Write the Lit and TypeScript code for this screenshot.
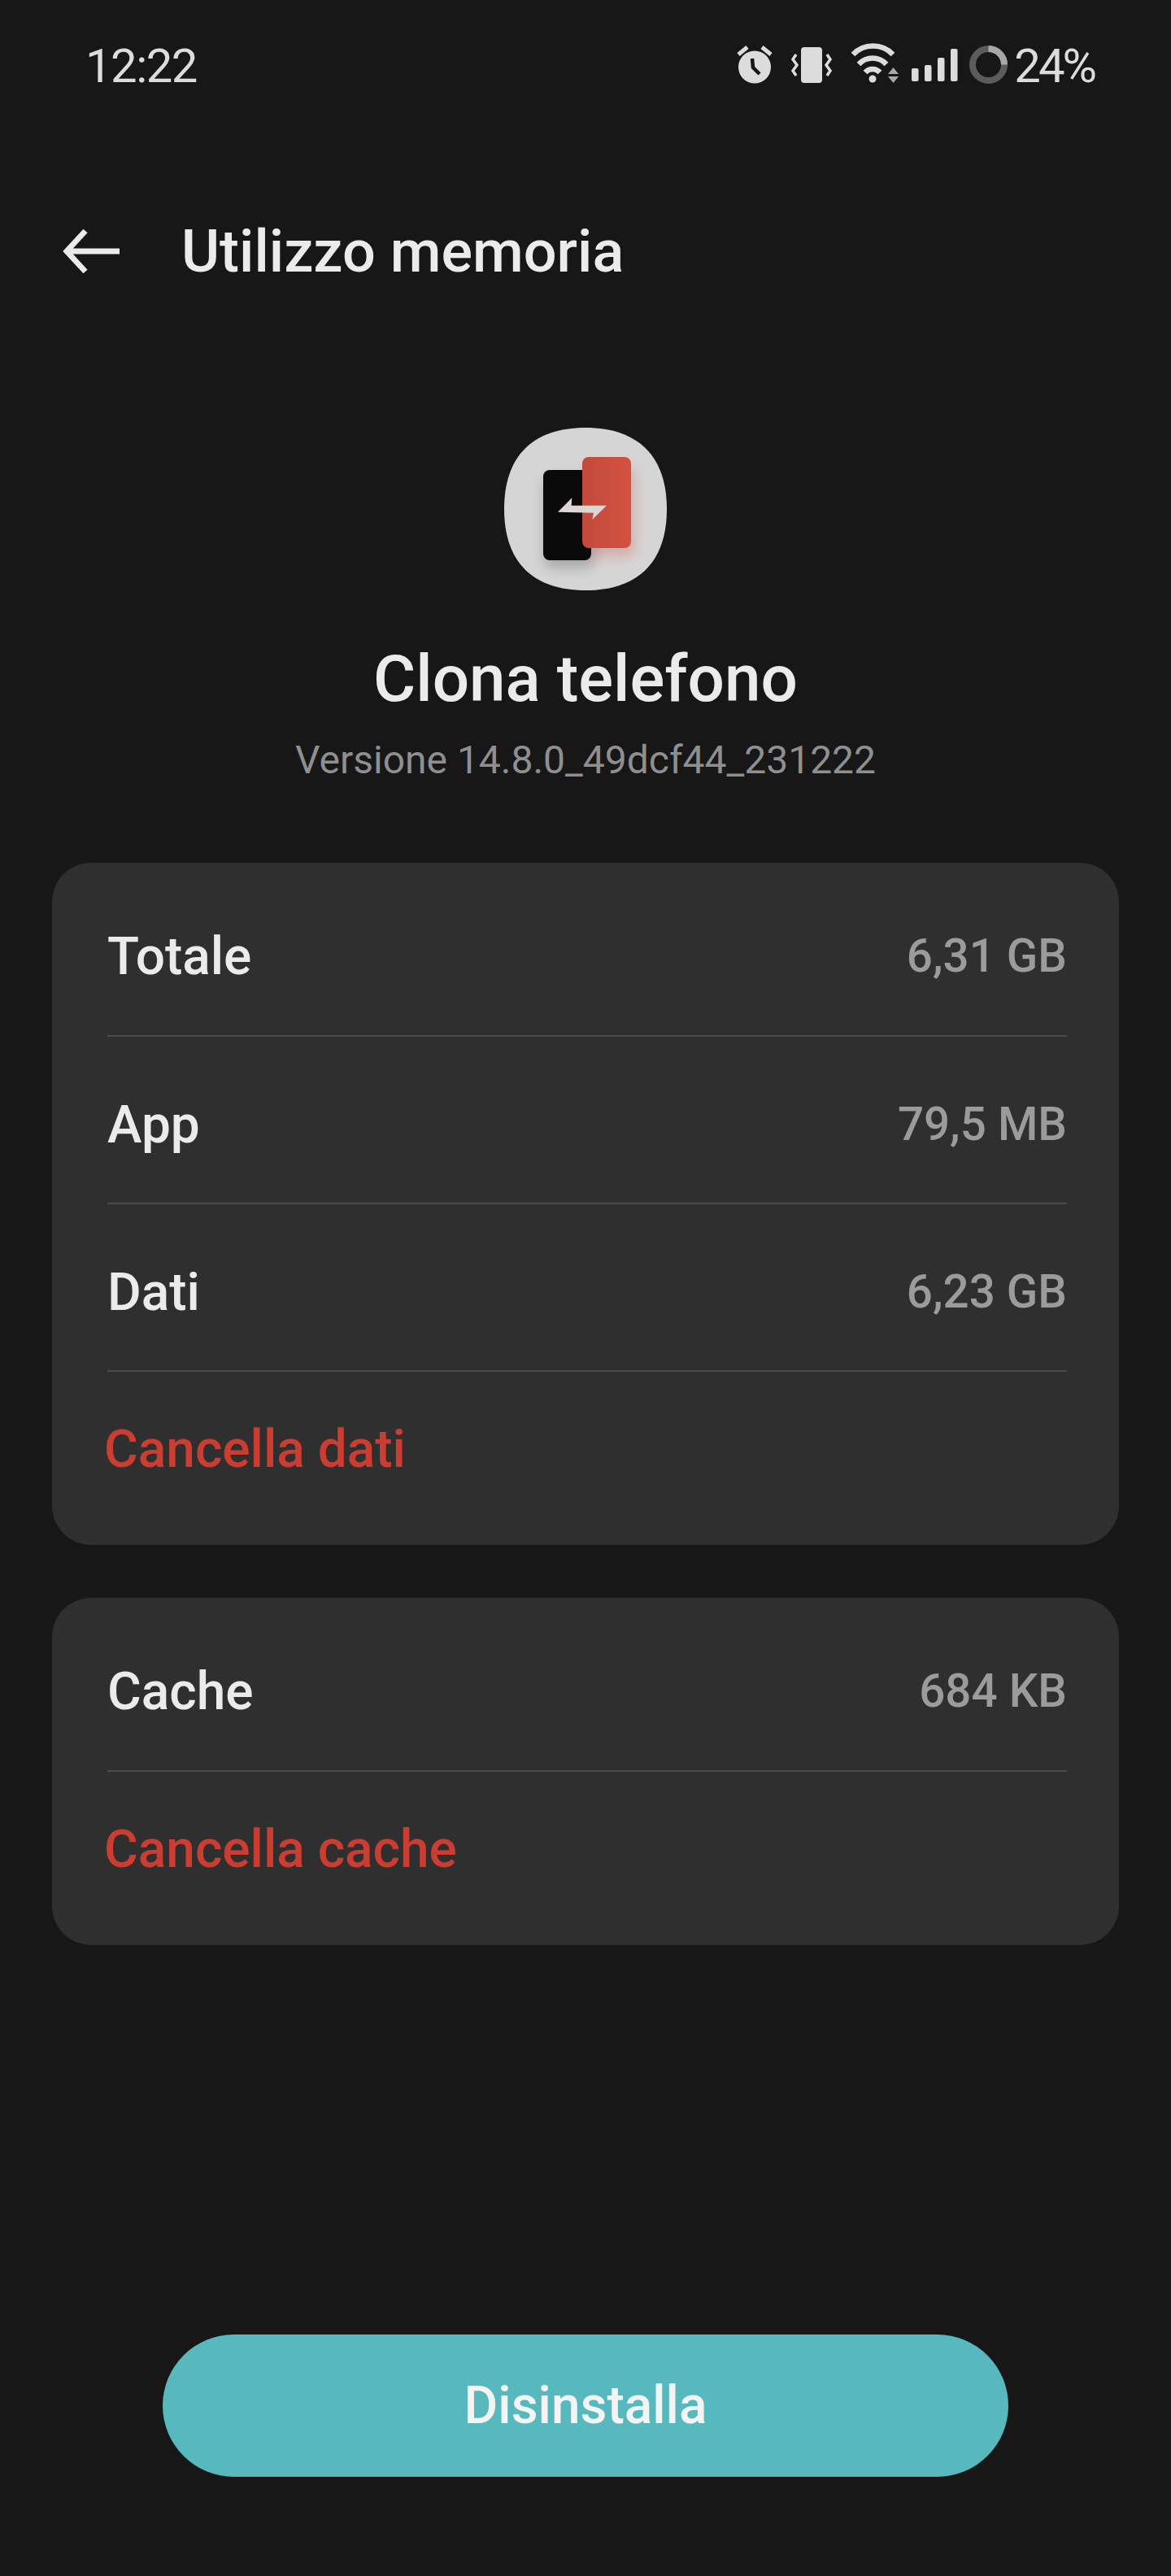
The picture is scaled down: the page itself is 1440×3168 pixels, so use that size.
import { LitElement, html, css } from 'lit';
import { customElement } from 'lit/decorators.js';

@customElement('app-root')
export class AppRoot extends LitElement {
  static styles = css`
    :host {
      display: block;
      width: 1440px;
      height: 3168px;
      background: #171718;
      font-family: Roboto, "Liberation Sans", sans-serif;
      color: #ebebeb;
      overflow: hidden;
    }

    .screen {
      height: 3168px;
      display: flex;
      flex-direction: column;
      box-sizing: border-box;
    }

    .status {
      height: 80px;
      margin-top: 41px;
      padding: 0 94px 0 105px;
      display: flex;
      align-items: center;
      justify-content: space-between;
      color: #dcdcdc;
    }

    .time {
      font-size: 58px;
      letter-spacing: -1.5px;
    }

    .status-right {
      display: flex;
      align-items: center;
    }

    .status-right svg {
      display: block;
      margin-top: -2px;
    }

    .battery-text {
      font-size: 58px;
      letter-spacing: -3px;
      margin-left: 3px;
    }

    .toolbar {
      margin-top: 138px;
      height: 100px;
      padding-left: 76px;
      display: flex;
      align-items: center;
    }

    .back {
      display: block;
    }

    .title {
      margin-left: 75px;
      font-size: 72px;
      font-weight: 500;
    }

    .app-head {
      margin-top: 167px;
      display: flex;
      flex-direction: column;
      align-items: center;
    }

    .app-name {
      margin-top: 64px;
      font-size: 80px;
      line-height: 90px;
      font-weight: 500;
    }

    .version {
      margin-top: 27px;
      font-size: 48px;
      line-height: 56px;
      color: #8f8f8f;
    }

    .card {
      margin: 0 64px;
      background: #302f30;
      border-radius: 48px;
      padding: 0 64px 0 68px;
    }

    .first {
      margin-top: 98px;
    }

    .second {
      margin-top: 65px;
    }

    .row {
      height: 206px;
      box-sizing: border-box;
      display: flex;
      align-items: center;
      justify-content: space-between;
      border-bottom: 2px solid #4b4b4b;
      padding-top: 12px;
    }

    .row.top {
      height: 214px;
      padding-top: 18px;
    }

    .label {
      font-size: 64px;
      font-weight: 500;
    }

    .value {
      font-size: 56.5px;
      font-weight: 500;
      color: #9c9b9c;
    }

    .action {
      height: 213px;
      box-sizing: border-box;
      margin-left: -4px;
      padding-bottom: 22px;
      display: flex;
      align-items: center;
      font-size: 64px;
      font-weight: 500;
      color: #cc3d31;
    }

    .footer {
      margin-top: auto;
      padding-bottom: 122px;
      display: flex;
      justify-content: center;
    }

    .uninstall {
      width: 1040px;
      height: 175px;
      border-radius: 88px;
      background: #57b9bd;
      display: flex;
      align-items: center;
      justify-content: center;
      font-size: 64px;
      font-weight: 500;
      color: #f4f4f4;
    }
  `;

  render() {
    return html`
      <div class="screen">
        <div class="status">
          <span class="time">12:22</span>
          <div class="status-right">
            <svg width="340" height="60" viewBox="0 0 340 60" fill="#dcdcdc">
              <!-- alarm -->
              <circle cx="24" cy="32.5" r="20" />
              <path d="M4 17 L15 8" stroke="#dcdcdc" stroke-width="5" />
              <path d="M33 8 L44 17" stroke="#dcdcdc" stroke-width="5" />
              <path d="M21 22 L22 33 L30 41" fill="none" stroke="#171718" stroke-width="4.5" />
              <!-- vibrate -->
              <rect x="81" y="8" width="26" height="44" rx="4" />
              <path d="M75 17 L71 23 L76 30 L71 37 L75 43" fill="none" stroke="#dcdcdc" stroke-width="3.5" />
              <path d="M113 17 L117 23 L112 30 L117 37 L113 43" fill="none" stroke="#dcdcdc" stroke-width="3.5" />
              <!-- wifi -->
              <path d="M145 17 A34 34 0 0 1 194 17" fill="none" stroke="#dcdcdc" stroke-width="6.5" />
              <path d="M152 29 A23 23 0 0 1 186 29" fill="none" stroke="#dcdcdc" stroke-width="6.5" />
              <path d="M160 39 A12 12 0 0 1 178 39" fill="none" stroke="#dcdcdc" stroke-width="6.5" />
              <circle cx="169" cy="47" r="4.5" />
              <path d="M188 41 L194.500 33 L201 41 Z" fill="#a8a8a8" />
              <path d="M188 44 L201 44 L194.500 52 Z" fill="#a8a8a8" />
              <!-- signal -->
              <rect x="217" y="34" width="8.500" height="16" rx="2" />
              <rect x="233" y="30" width="8.500" height="20" rx="2" />
              <rect x="249" y="21" width="8.500" height="29" rx="2" />
              <rect x="265" y="10" width="8.500" height="40" rx="2" />
              <!-- battery ring -->
              <circle cx="311.500" cy="29.500" r="19.500" fill="none" stroke="#5c5c5c" stroke-width="8" />
              <path d="M311.500 10 A19.500 19.500 0 0 1 331 29.500" fill="none" stroke="#a8a8a8" stroke-width="8" />
            </svg>
            <span class="battery-text">24%</span>
          </div>
        </div>

        <div class="toolbar">
          <svg class="back" width="72" height="56" viewBox="0 0 72 56" fill="none" stroke="#ebebeb" stroke-width="7">
            <path d="M29 3 L6 28 L29 53" />
            <path d="M6 28 L71 28" />
          </svg>
          <span class="title">Utilizzo memoria</span>
        </div>

        <div class="app-head">
          <svg width="200" height="200" viewBox="0 0 200 200">
            <defs>
              <filter id="soft" x="-40%" y="-40%" width="180%" height="180%">
                <feGaussianBlur stdDeviation="8" />
              </filter>
              <linearGradient id="red" x1="0" x2="1" y1="0" y2="0">
                <stop offset="0" stop-color="#c24a3c" />
                <stop offset="1" stop-color="#d4523f" />
              </linearGradient>
            </defs>
            <path d="M100 0 C165 0 200 35 200 100 C200 165 165 200 100 200 C35 200 0 165 0 100 C0 35 35 0 100 0 Z" fill="#d6d5d5" />
            <rect x="50" y="62" width="60" height="110" rx="8" fill="#000" opacity="0.22" filter="url(#soft)" />
            <rect x="100" y="50" width="60" height="108" rx="8" fill="#c8503f" opacity="0.3" filter="url(#soft)" />
            <rect x="48" y="52" width="59" height="111" rx="8" fill="#0b0a0b" />
            <rect x="96" y="36" width="60" height="112" rx="8" fill="url(#red)" />
            <path d="M66 103.700 L83.300 86.300 L82.700 95.700 L126 95.700 L108.300 113 L110 104.700 Z" fill="#dcd6d4" />
          </svg>
          <div class="app-name">Clona telefono</div>
          <div class="version">Versione 14.8.0_49dcf44_231222</div>
        </div>

        <div class="card first">
          <div class="row top"><span class="label">Totale</span><span class="value">6,31 GB</span></div>
          <div class="row"><span class="label">App</span><span class="value">79,5 MB</span></div>
          <div class="row"><span class="label">Dati</span><span class="value">6,23 GB</span></div>
          <div class="action">Cancella dati</div>
        </div>

        <div class="card second">
          <div class="row top"><span class="label">Cache</span><span class="value">684 KB</span></div>
          <div class="action">Cancella cache</div>
        </div>

        <div class="footer">
          <div class="uninstall">Disinstalla</div>
        </div>
      </div>
    `;
  }
}
